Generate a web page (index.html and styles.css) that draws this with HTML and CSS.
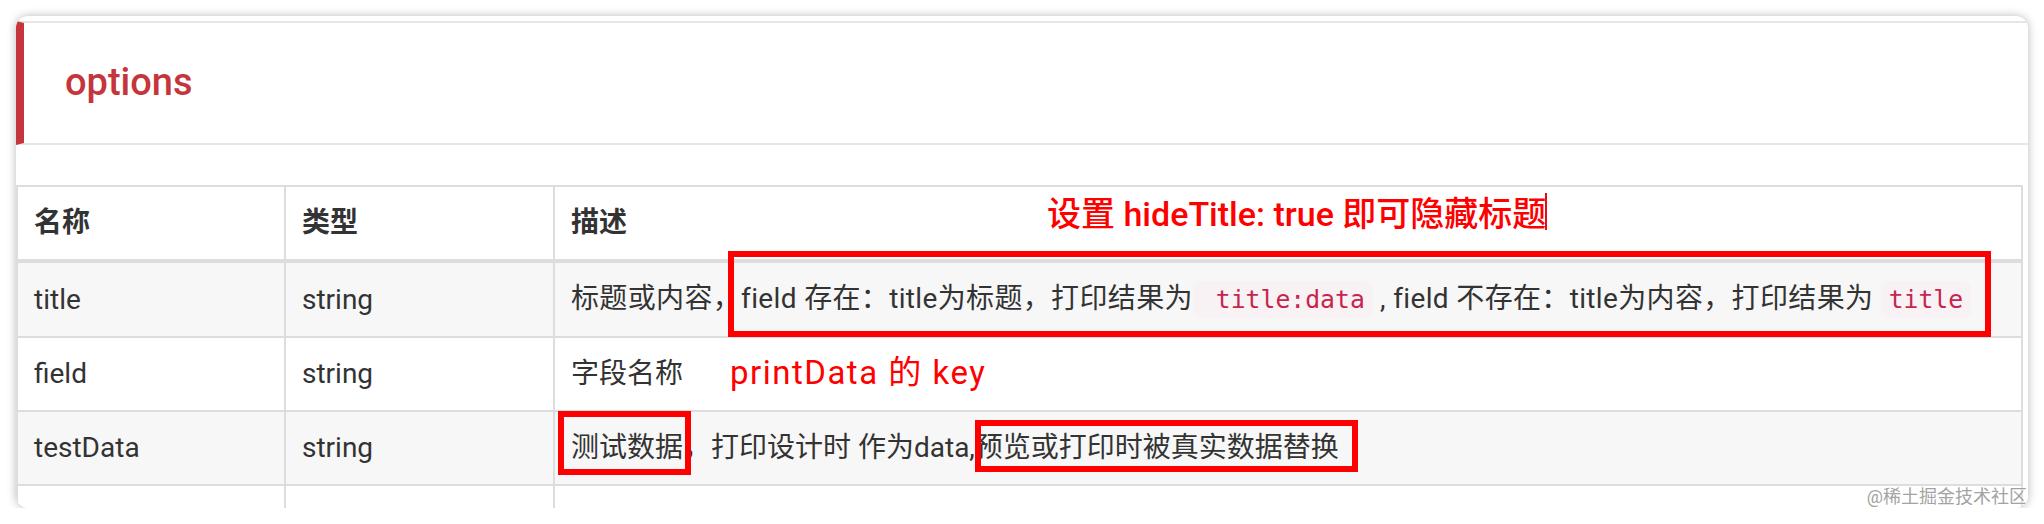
FILE: index.html
```html
<!DOCTYPE html>
<html lang="zh">
<head>
<meta charset="utf-8">
<title>options</title>
<link rel="stylesheet" href="styles.css">
</head>
<body>
<div class="card">
  <div class="heading"><h2 class="heading-title">options</h2></div>
  <table class="props">
    <thead>
      <tr><th class="c-name">名称</th><th class="c-type">类型</th><th class="c-desc">描述</th></tr>
    </thead>
    <tbody>
      <tr class="odd"><td>title</td><td>string</td><td class="wide">标题或内容，field 存在：title为标题，打印结果为<code> title:data</code> , field 不存在：title为内容，打印结果为 <code>title</code></td></tr>
      <tr><td>field</td><td>string</td><td>字段名称</td></tr>
      <tr class="odd"><td>testData</td><td>string</td><td>测试数据，打印设计时 作为data,预览或打印时被真实数据替换</td></tr>
      <tr><td>&nbsp;</td><td>&nbsp;</td><td>&nbsp;</td></tr>
    </tbody>
  </table>

  <div class="note note-hide">设置 hideTitle: true 即可隐藏标题</div>
  <div class="caret"></div>
  <div class="note note-key">printData 的 key</div>
  <div class="mark mark-1"></div>
  <div class="mark mark-2"></div>
  <div class="mark mark-3"></div>
  <div class="watermark">@稀土掘金技术社区</div>
</div>
</body>
</html>
```

FILE: styles.css
```css
html, body {
  margin: 0;
  padding: 0;
  background: #ffffff;
}

body {
  font-family: "Roboto", "Noto Sans CJK SC", sans-serif;
  color: #333333;
  padding: 16px 0 0 16px;
}

.card {
  position: relative;
  width: 2012px;
  height: 492px;
  box-sizing: border-box;
  padding-top: 5px;
  background: #ffffff;
  border-radius: 12px;
  overflow: hidden;
  box-shadow: 0 0 10px rgba(0, 0, 0, 0.28);
}

.heading {
  height: 120px;
  border-top: 2px solid #e6e6e6;
  border-bottom: 2px solid #e6e6e6;
  border-left: 8px solid #c4363c;
  display: flex;
  align-items: center;
  padding-left: 41px;
  margin-bottom: 40px;
}

.heading-title {
  margin: 0;
  font-size: 38px;
  font-weight: 500;
  color: #c4363c;
  line-height: 1;
  padding-bottom: 2px;
}

.props {
  width: 2007px;
  table-layout: fixed;
  border-collapse: separate;
  border-spacing: 0;
  border-top: 2px solid #dddddd;
  border-left: 2px solid #dddddd;
  font-size: 28px;
  line-height: 40px;
}

.props th,
.props td {
  box-sizing: border-box;
  padding: 16px;
  text-align: left;
  vertical-align: middle;
  border-right: 2px solid #dddddd;
  border-bottom: 2px solid #dddddd;
  white-space: nowrap;
  overflow: hidden;
}

.props td.wide {
  letter-spacing: 0.35px;
}

.props th {
  font-weight: 700;
  border-bottom-width: 4px;
}

.c-name { width: 268px; }
.c-type { width: 269px; }

.props tr.odd td {
  background: #f7f7f7;
}

.props code {
  font-family: "DejaVu Sans Mono", monospace;
  font-size: 24.75px;
  letter-spacing: 0;
  color: #c7254e;
  background: #f9f2f4;
  padding: 4px 8px;
  border-radius: 8px;
  white-space: pre;
}

.note {
  position: absolute;
  color: #ff0000;
  white-space: nowrap;
}

.note-hide {
  left: 1031px;
  top: 181px;
  font-size: 34px;
  line-height: 34px;
  font-weight: 500;
}

.caret {
  position: absolute;
  left: 1529px;
  top: 177px;
  width: 2px;
  height: 37px;
  background: #e01010;
}

.note-key {
  left: 714px;
  top: 340px;
  font-size: 33px;
  line-height: 33px;
  letter-spacing: 1.5px;
}

.mark {
  position: absolute;
  box-sizing: border-box;
  border: 6px solid #ff0000;
}

.mark-1 { left: 712px; top: 235px; width: 1263px; height: 86px; }
.mark-2 { left: 542px; top: 395px; width: 133px; height: 64px; }
.mark-3 { left: 959px; top: 404px; width: 383px; height: 52px; }

.watermark {
  position: absolute;
  right: 1px;
  bottom: 1px;
  font-size: 18px;
  line-height: 20px;
  color: #a3a3a3;
  text-shadow: 0 0 2px #ffffff;
}
```
